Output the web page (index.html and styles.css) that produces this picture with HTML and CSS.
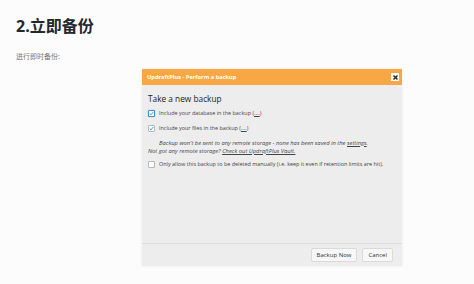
FILE: index.html
```html
<!doctype html>
<html lang="zh">
    <head>
        <meta charset="UTF-8" />
        <title>立即备份</title>
        <link rel="stylesheet" href="styles.css">
    </head>
    <body>
        <div class="page">
            <h2 class="title">2.立即备份</h2>
            <p class="intro">进行即时备份:</p>

            <div class="dialog">
                <div class="dialog-head">
                    <span class="dialog-title">UpdraftPlus - Perform a backup</span>
                    <span class="close-btn">
                        <svg width="5" height="5" viewBox="0 0 5 5">
                            <path d="M0.5 0.5 L4.5 4.5 M4.5 0.5 L0.5 4.5" stroke="#222" stroke-width="1.4" />
                        </svg>
                    </span>
                </div>
                <div class="dialog-body">
                    <h3 class="body-title">Take a new backup</h3>
                    <label class="check-row">
                        <span class="box focus">
                            <svg width="7" height="7" viewBox="0 0 8 8">
                                <path d="M1.2 4.2 L3.2 6 L6.8 1.8" fill="none" stroke="#1e8cbe" stroke-width="1.4" />
                            </svg>
                        </span>
                        <span>Include your database in the backup (<u>....</u>)</span>
                    </label>
                    <label class="check-row">
                        <span class="box">
                            <svg width="7" height="7" viewBox="0 0 8 8">
                                <path d="M1.2 4.2 L3.2 6 L6.8 1.8" fill="none" stroke="#1e8cbe" stroke-width="1.4" />
                            </svg>
                        </span>
                        <span>Include your files in the backup (<u>....</u>)</span>
                    </label>
                    <p class="note">
                        <span class="note-first">Backup won't be sent to any remote storage - none has been saved in the <u>settings</u>.</span>
                        Not got any remote storage? <u>Check out UpdraftPlus Vault.</u>
                    </p>
                    <label class="check-row">
                        <span class="box"></span>
                        <span>Only allow this backup to be deleted manually (i.e. keep it even if retention limits are hit).</span>
                    </label>
                </div>
                <div class="dialog-foot">
                    <button class="btn">Backup Now</button>
                    <button class="btn">Cancel</button>
                </div>
            </div>
        </div>
    </body>
</html>
```

FILE: styles.css
```css
* {
    margin: 0;
    padding: 0;
    box-sizing: border-box;
}

body {
    background: #fcfcfc;
    font-family: "Open Sans", "Noto Sans CJK SC", sans-serif;
    color: #333;
}

.page {
    padding: 13px 0 0 16px;
    height: 284px;
    overflow: hidden;
}

.title {
    font-family: "Open Sans", "Noto Sans CJK SC", sans-serif;
    font-size: 16px;
    font-weight: 700;
    color: #23282d;
    line-height: 26px;
}

.intro {
    font-family: "Noto Sans CJK SC", sans-serif;
    font-size: 7px;
    color: #777;
    margin-top: 11px;
    line-height: 12px;
}

.dialog {
    width: 260px;
    height: 197px;
    margin: 7px 0 0 126px;
    background: #ededed;
    display: flex;
    flex-direction: column;
    box-shadow: 0 0 3px rgba(0, 0, 0, 0.08);
}

.dialog-head {
    height: 16px;
    flex-shrink: 0;
    background: #f9a745;
    display: flex;
    align-items: center;
    justify-content: space-between;
    padding: 0 3px 0 5px;
}

.dialog-title {
    font-size: 5.7px;
    font-weight: 700;
    color: #fff;
}

.close-btn {
    width: 8px;
    height: 8px;
    background: #fff;
    display: flex;
    align-items: center;
    justify-content: center;
}

.dialog-body {
    flex: 1;
    padding: 7px 7px 0 6px;
}

.body-title {
    font-size: 8.3px;
    font-weight: 400;
    color: #222;
    margin-bottom: 3px;
    line-height: 14px;
}

.check-row {
    display: flex;
    align-items: center;
    gap: 4px;
    font-size: 5.45px;
    color: #444;
    margin-bottom: 6px;
    line-height: 9px;
    white-space: nowrap;
}

.box {
    width: 7px;
    height: 7px;
    border: 1px solid #b4b9be;
    background: #fff;
    border-radius: 1px;
    display: flex;
    align-items: center;
    justify-content: center;
    flex-shrink: 0;
}

.box.focus {
    border-color: #3d8fc9;
    box-shadow: 0 0 1px #5b9dd9;
}

.note {
    font-size: 5.8px;
    font-style: italic;
    color: #444;
    line-height: 8px;
    margin-top: -0.5px;
    margin-bottom: 5.5px;
    white-space: nowrap;
}

.note-first {
    display: block;
    padding-left: 11px;
}

.dialog-foot {
    height: 23px;
    flex-shrink: 0;
    border-top: 1px solid #dcdcdc;
    display: flex;
    align-items: center;
    justify-content: flex-end;
    gap: 5px;
    padding-right: 9px;
}

.btn {
    font-family: "Open Sans", sans-serif;
    font-size: 6px;
    color: #333;
    background: #f7f7f7;
    border: 1px solid #dadada;
    border-radius: 2px;
    height: 14px;
    padding: 0 5px;
}
```
